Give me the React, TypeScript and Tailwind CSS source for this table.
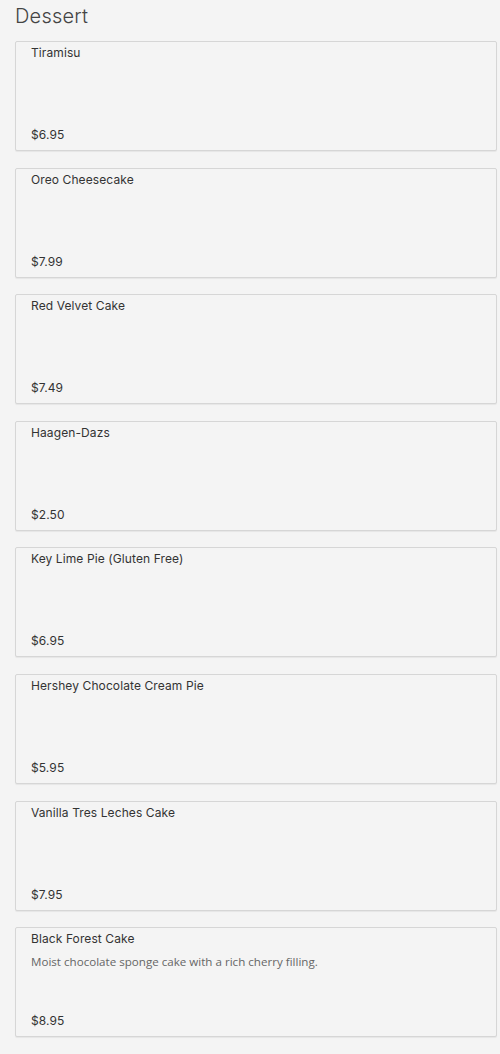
import React from "react";

const items = [
  { name: "Tiramisu", price: "$6.95" },
  { name: "Oreo Cheesecake", price: "$7.99" },
  { name: "Red Velvet Cake", price: "$7.49" },
  { name: "Haagen-Dazs", price: "$2.50" },
  { name: "Key Lime Pie (Gluten Free)", price: "$6.95" },
  { name: "Hershey Chocolate Cream Pie", price: "$5.95" },
  { name: "Vanilla Tres Leches Cake", price: "$7.95" },
  {
    name: "Black Forest Cake",
    price: "$8.95",
    desc: "Moist chocolate sponge cake with a rich cherry filling.",
  },
];

export default function App() {
  return (
    <div
      className="min-h-[1054px] w-[500px] bg-[#f4f4f4] pl-[15px] pr-[3px] pt-[1px]"
      style={{ fontFamily: "Inter, 'Noto Sans', sans-serif" }}
    >
      <h2 className="text-[20px] font-light leading-[30px] tracking-[0.2px] text-[#444] mb-[10px]">
        Dessert
      </h2>
      <div className="flex flex-col gap-[16.6px]">
        {items.map((it) => (
          <div
            key={it.name}
            className="flex h-[110px] flex-col justify-between rounded-[2px] border border-[#d6d6d6] bg-[#f4f4f4] pl-[15px] pr-4 pt-[2px] pb-[6px] shadow-[0_1px_1px_rgba(0,0,0,0.06)]"
          >
            <div>
              <div className="text-[12px] leading-[18px] tracking-[0.1px] text-[#333]">{it.name}</div>
              {it.desc && (
                <div
                  className="mt-[5px] text-[11.6px] leading-[18px] text-[#666]"
                  style={{ fontFamily: "'Open Sans', sans-serif" }}
                >
                  {it.desc}
                </div>
              )}
            </div>
            <div className="text-[12px] leading-[18px] tracking-[0.1px] text-[#333]">{it.price}</div>
          </div>
        ))}
      </div>
    </div>
  );
}
